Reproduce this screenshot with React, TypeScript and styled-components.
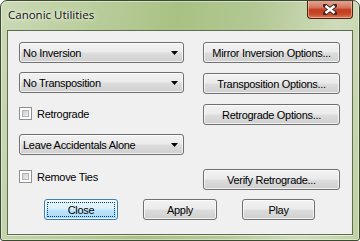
import React from "react";
import styled, { createGlobalStyle } from "styled-components";

const Global = createGlobalStyle`
  html, body { margin: 0; padding: 0; background: #fff; }
  body { width: 360px; height: 241px; overflow: hidden; }
`;

const Window = styled.div`
  box-sizing: border-box;
  width: 360px;
  height: 241px;
  border: 1px solid #3b4a33;
  border-radius: 7px 7px 3px 3px;
  background: linear-gradient(100deg, #cbd9b6 0%, #bccf9f 20%, #a9c184 45%, #b3c894 65%, #cfdcbc 85%, #bfd1a2 100%);
  display: flex;
  flex-direction: column;
  box-shadow: inset 0 0 0 1px rgba(255,255,255,0.45);
  overflow: hidden;
`;

const TitleBar = styled.div`
  height: 29px;
  display: flex;
  align-items: flex-start;
  padding-left: 7px;
  padding-right: 6px;
`;

const Title = styled.div`
  font-family: "Open Sans", "Noto Sans", sans-serif;
  font-size: 11.5px;
  color: #111;
  margin-top: 6px;
  line-height: 16px;
  text-shadow: 0 0 6px rgba(255,255,255,0.9), 0 0 3px rgba(255,255,255,0.8);
  flex: 1;
`;

const CloseBox = styled.div`
  box-sizing: border-box;
  width: 46px;
  height: 19px;
  margin-top: -1px;
  border: 1px solid #4a2218;
  border-top: none;
  border-radius: 0 0 4px 4px;
  background: linear-gradient(#e8a896 0%, #d57a62 40%, #c23c1e 55%, #c84a2c 80%, #e07c58 100%);
  box-shadow: inset 0 0 0 1px rgba(255,220,200,0.5);
  display: flex;
  align-items: center;
  justify-content: center;
`;

const Client = styled.div`
  flex: 1;
  margin: 0 6px 5px 6px;
  border: 1px solid #5d6d50;
  background: #f0f0f0;
  position: relative;
  display: flex;
  flex-direction: column;
  font-family: "Liberation Sans", Arial, sans-serif;
  font-size: 11px;
  letter-spacing: -0.3px;
  color: #000;
  box-shadow: 0 1px 0 rgba(255,255,255,0.6);
`;

const Columns = styled.div`
  display: flex;
  padding: 11px 0 0 11px;
  gap: 19px;
`;

const LeftCol = styled.div`
  width: 165px;
  display: flex;
  flex-direction: column;
`;

const RightCol = styled.div`
  width: 137px;
  display: flex;
  flex-direction: column;
`;

const Combo = styled.div<{ $mt?: number }>`
  box-sizing: border-box;
  height: 21px;
  margin-top: ${(p) => p.$mt ?? 0}px;
  border: 1px solid #707070;
  border-radius: 3px;
  background: linear-gradient(#f2f2f2 0%, #ebebeb 48%, #dddddd 52%, #cfcfcf 100%);
  box-shadow: inset 0 0 0 1px rgba(255,255,255,0.7);
  display: flex;
  align-items: center;
  padding: 0 5px 0 3px;
`;

const ComboText = styled.span`
  flex: 1;
  white-space: nowrap;
`;

const Button = styled.div<{ $mt?: number; $w?: number; $default?: boolean }>`
  box-sizing: border-box;
  width: ${(p) => (p.$w ? `${p.$w}px` : "auto")};
  height: 21px;
  margin-top: ${(p) => p.$mt ?? 0}px;
  border: 1px solid ${(p) => (p.$default ? "#3c7fb1" : "#707070")};
  border-radius: 3px;
  background: ${(p) =>
    p.$default
      ? "linear-gradient(#eaf6fd 0%, #d9f0fc 48%, #bee6fd 52%, #a7d9f5 100%)"
      : "linear-gradient(#f2f2f2 0%, #ebebeb 48%, #dddddd 52%, #cfcfcf 100%)"};
  box-shadow: inset 0 0 0 1px rgba(255,255,255,0.7);
  display: flex;
  align-items: center;
  justify-content: center;
  white-space: nowrap;
  position: relative;
`;

const FocusRect = styled.span`
  position: absolute;
  inset: 2px;
  border: 1px dotted #1a3a5a;
  border-radius: 1px;
  pointer-events: none;
`;

const CheckRow = styled.div<{ $mt?: number }>`
  height: 13px;
  margin-top: ${(p) => p.$mt ?? 0}px;
  display: flex;
  align-items: center;
  gap: 5px;
`;

const CheckBox = styled.span`
  box-sizing: border-box;
  width: 13px;
  height: 13px;
  border: 1px solid #8e8f8f;
  background: #fff;
  padding: 2px;
  display: block;
  &::after {
    content: "";
    display: block;
    width: 100%;
    height: 100%;
    box-sizing: border-box;
    border: 1px solid #b0b3b6;
    background: linear-gradient(135deg, #cbcfd5 0%, #eef0f2 100%);
  }
`;

const BottomRow = styled.div`
  display: flex;
  padding-left: 36px;
  margin-top: 9px;
  gap: 25px;
`;

const Arrow = () => (
  <svg width="7" height="4" viewBox="0 0 7 4">
    <path d="M0 0H7L3.5 4Z" fill="#000" />
  </svg>
);

const CloseX = () => (
  <svg width="14" height="11" viewBox="0 0 14 11">
    <path
      d="M2 1.5L7 5.5L12 1.5M2 9.5L7 5.5L12 9.5"
      stroke="#3a2a2a"
      strokeWidth="4.2"
      fill="none"
      strokeLinecap="round"
    />
    <path
      d="M2.5 2L7 5.5L11.5 2M2.5 9L7 5.5L11.5 9"
      stroke="#fff"
      strokeWidth="2.4"
      fill="none"
    />
  </svg>
);

export default function App() {
  return (
    <>
      <Global />
      <Window>
        <TitleBar>
          <Title>Canonic Utilities</Title>
          <CloseBox>
            <CloseX />
          </CloseBox>
        </TitleBar>
        <Client>
          <Columns>
            <LeftCol>
              <Combo>
                <ComboText>No Inversion</ComboText>
                <Arrow />
              </Combo>
              <Combo $mt={9}>
                <ComboText>No Transposition</ComboText>
                <Arrow />
              </Combo>
              <CheckRow $mt={14}>
                <CheckBox />
                <span>Retrograde</span>
              </CheckRow>
              <Combo $mt={14}>
                <ComboText>Leave Accidentals Alone</ComboText>
                <Arrow />
              </Combo>
              <CheckRow $mt={15}>
                <CheckBox />
                <span>Remove Ties</span>
              </CheckRow>
            </LeftCol>
            <RightCol>
              <Button>Mirror Inversion Options...</Button>
              <Button $mt={10}>Transposition Options...</Button>
              <Button $mt={10}>Retrograde Options...</Button>
              <Button $mt={44}>Verify Retrograde...</Button>
            </RightCol>
          </Columns>
          <BottomRow>
            <Button $w={74} $default>
              Close
              <FocusRect />
            </Button>
            <Button $w={74}>Apply</Button>
            <Button $w={73}>Play</Button>
          </BottomRow>
        </Client>
      </Window>
    </>
  );
}
